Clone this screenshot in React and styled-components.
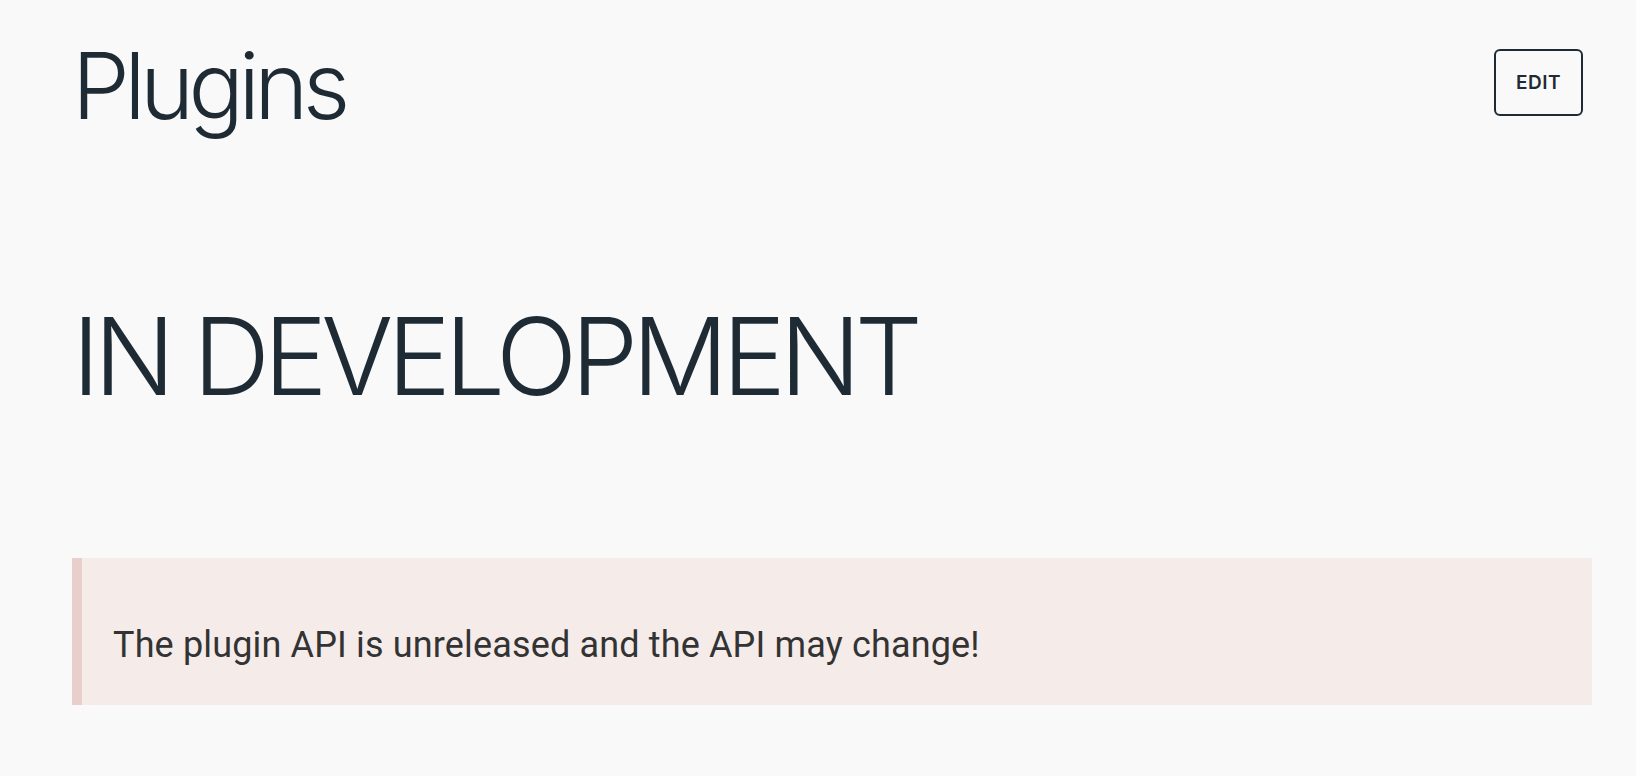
import React from "react";
import styled, { createGlobalStyle } from "styled-components";

const GlobalStyle = createGlobalStyle`
  html, body {
    margin: 0;
    padding: 0;
    background: #f9f9f9;
  }
  body {
    font-family: Inter, "Noto Sans", sans-serif;
    color: #1e2b35;
  }
`

const Page = styled.div`
  padding: 40px 44px 40px 72px;
`
const Header = styled.div`
  display: flex;
  justify-content: space-between;
  align-items: flex-start;
`
const Title = styled.h1`
  margin: 0;
  font-size: 92px;
  line-height: 92px;
  font-weight: 300;
  letter-spacing: -5.6px;
`
const EditButton = styled.button`
  margin: 9px 9px 0 0;
  width: 89px;
  height: 67px;
  border: 2px solid #1e2b35;
  border-radius: 6px;
  background: transparent;
  color: #1e2b35;
  font-family: Inter, "Noto Sans", sans-serif;
  font-size: 19px;
  font-weight: 600;
  letter-spacing: 0.5px;
  cursor: pointer;
`
const Status = styled.h2`
  margin: 171px 0 0;
  font-size: 107px;
  line-height: 107px;
  font-weight: 300;
  letter-spacing: -6.15px;
`
const Notice = styled.div`
  margin-top: 148px;
  padding: 69px 0 42px 31px;
  background: #f5ecea;
  border-left: 10px solid #e9cfcc;
`
const NoticeText = styled.p`
  margin: 0;
  font-family: Roboto, "Noto Sans", sans-serif;
  font-size: 36px;
  line-height: 36px;
  letter-spacing: 0.15px;
  color: #333;
`

const App = () => {
  return (
    <Page>
      <GlobalStyle />
      <Header>
        <Title>Plugins</Title>
        <EditButton>EDIT</EditButton>
      </Header>
      <Status>IN DEVELOPMENT</Status>
      <Notice>
        <NoticeText>The plugin API is unreleased and the API may change!</NoticeText>
      </Notice>
    </Page>
  );
};

export default App;
